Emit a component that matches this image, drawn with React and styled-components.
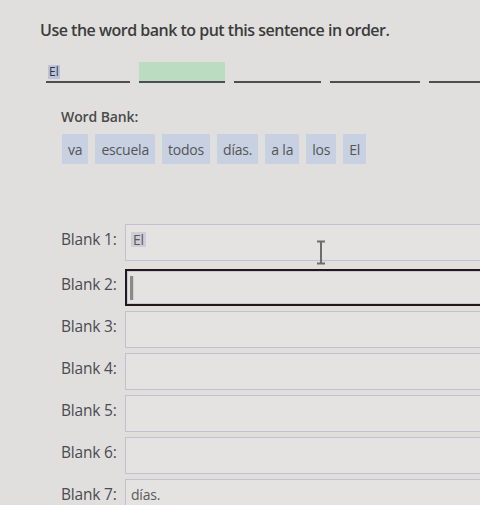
import React from "react";
import styled, { createGlobalStyle } from "styled-components";

const Global = createGlobalStyle`
  html, body { margin: 0; padding: 0; }
  body {
    background: #e0dfdd;
    font-family: "Open Sans", "Liberation Sans", sans-serif;
    color: #444;
    overflow: hidden;
  }
`;

const Page = styled.div`
  position: relative;
  width: 480px;
  height: 505px;
  overflow: hidden;
  padding-top: 20px;
  box-sizing: border-box;
`;

const Title = styled.div`
  padding-left: 40px;
  font-size: 16px;
  font-weight: 600;
  color: #3c3c3c;
  letter-spacing: -0.5px;
  line-height: 20px;
`;

const Sentence = styled.div`
  display: flex;
  gap: 9px;
  margin-top: 22px;
  padding-left: 46px;
  height: 21px;
`;

const Slot = styled.div`
  flex: 0 0 ${(p) => p.$w || 84}px;
  box-sizing: border-box;
  border-bottom: 2px solid #4e4e4e;
  background: ${(p) => (p.$active ? "#bcdcc1" : "transparent")};
  display: flex;
  align-items: flex-end;
  padding: 0 0 2px 2px;
`;

const SlotWord = styled.span`
  font-size: 12px;
  line-height: 14px;
  color: #34344c;
  background: #bcc4da;
  padding: 0 1px;
`;

const BankLabel = styled.div`
  margin-top: 25px;
  padding-left: 61px;
  font-size: 14px;
  font-weight: 600;
  color: #4a4a4a;
  letter-spacing: -0.1px;
  line-height: 18px;
`;

const Chips = styled.div`
  display: flex;
  gap: 7px;
  margin-top: 8px;
  padding-left: 62px;
`;

const Chip = styled.div`
  height: 30px;
  padding: 0 6px;
  background: #c7d1e1;
  display: flex;
  align-items: center;
  font-size: 14px;
  color: #555;
  letter-spacing: -0.2px;
`;

const Rows = styled.div`
  display: flex;
  flex-direction: column;
  gap: 5px;
  margin-top: 60px;
  padding-left: 61px;
`;

const Row = styled.div`
  display: flex;
  align-items: flex-start;
  gap: 4px;
  margin-bottom: ${(p) => (p.$extra ? 3 : 0)}px;
`;

const Label = styled.div`
  flex: 0 0 60px;
  margin-top: 7px;
  font-size: 15.5px;
  line-height: 16px;
  color: #4b4b52;
  letter-spacing: -0.2px;
  white-space: nowrap;
`;

const Field = styled.div`
  flex: 1;
  height: 37px;
  box-sizing: border-box;
  margin-right: -20px;
  background: #e4e3e2;
  border: ${(p) => (p.$focused ? "2px solid #1e1a1c" : "1px solid #c3c1cf")};
  box-shadow: ${(p) => (p.$focused ? "inset 0 0 0 1px #c9c8d4" : "none")};
  display: flex;
  align-items: ${(p) => (p.$focused ? "center" : "flex-start")};
  padding: ${(p) => (p.$focused ? "0 0 0 5px" : "7px 0 0 5px")};
  font-size: 14px;
  color: #5a5a5a;
  letter-spacing: -0.2px;
`;

const FieldWord = styled.span`
  background: ${(p) => (p.$marked ? "#cfcdd8" : "transparent")};
  padding: 0 ${(p) => (p.$marked ? 2 : 0)}px;
  line-height: 15px;
`;

const Caret = styled.span`
  display: block;
  width: 3px;
  height: 24px;
  background: #8a8a8a;
  border-right: 1px solid #cfcfcf;
  margin-left: -2px;
`;

const Pointer = styled.svg`
  position: absolute;
  left: 315px;
  top: 240px;
`;

const words = ["va", "escuela", "todos", "días.", "a la", "los", "El"];
const blanks = ["El", "", "", "", "", "", "días."];

export default function App() {
  return (
    <Page>
      <Global />
      <Title>Use the word bank to put this sentence in order.</Title>
      <Sentence>
        <Slot $w={84}>
          <SlotWord>El</SlotWord>
        </Slot>
        <Slot $w={86} $active />
        <Slot $w={87} />
        <Slot $w={90} />
        <Slot $w={60} />
      </Sentence>
      <BankLabel>Word Bank:</BankLabel>
      <Chips>
        {words.map((w) => (
          <Chip key={w}>{w}</Chip>
        ))}
      </Chips>
      <Rows>
        {blanks.map((v, i) => (
          <Row key={i} $extra={i === 0}>
            <Label>Blank {i + 1}:</Label>
            <Field $focused={i === 1}>
              {i === 1 ? <Caret /> : <FieldWord $marked={i === 0}>{v}</FieldWord>}
            </Field>
          </Row>
        ))}
      </Rows>
      <Pointer width="12" height="25" viewBox="0 0 12 25">
        <path d="M2 1.5h8M6 1.5v22M2 23.5h8" stroke="#6d6d6d" strokeWidth="2" fill="none" />
      </Pointer>
    </Page>
  );
}
